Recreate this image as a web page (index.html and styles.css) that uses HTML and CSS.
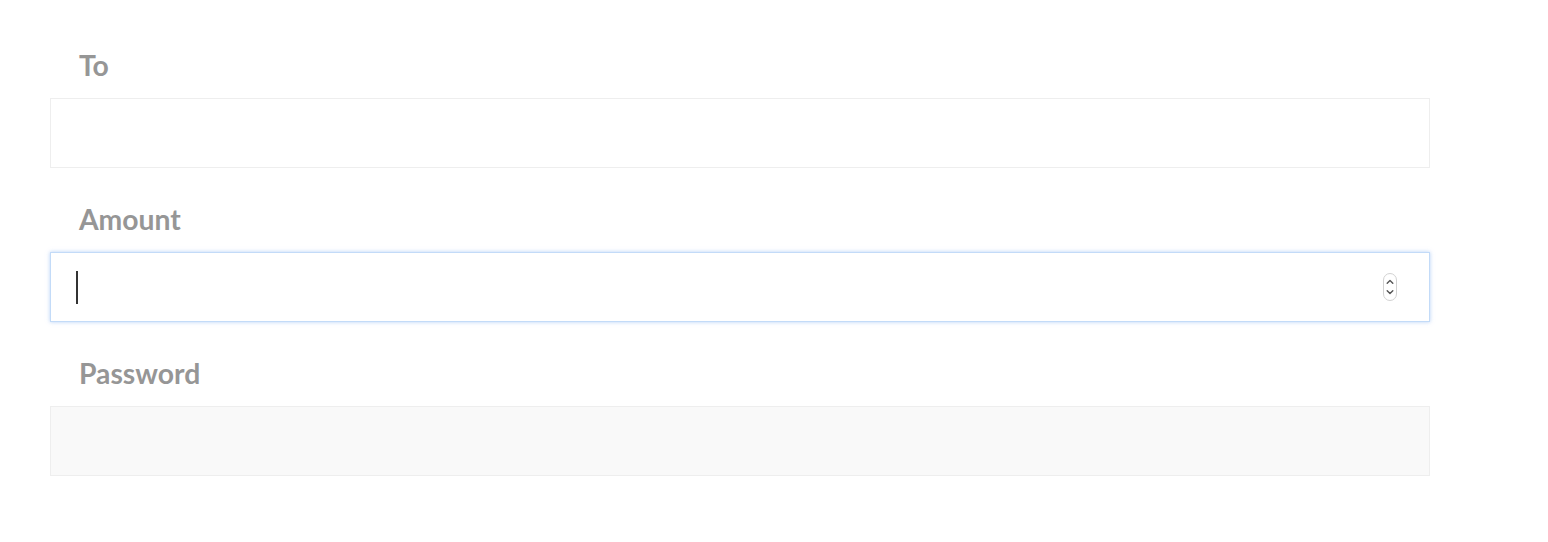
FILE: index.html
```html
<!DOCTYPE html>
<html lang="en">
<head>
<meta charset="utf-8">
<title>Send</title>
<link rel="stylesheet" href="styles.css">
</head>
<body>
<form class="form">
  <div class="field">
    <label class="label">To</label>
    <div class="input"></div>
  </div>
  <div class="field">
    <label class="label">Amount</label>
    <div class="input input--focus">
      <span class="caret"></span>
      <svg class="spinner" width="16" height="30" viewBox="0 0 16 30">
        <rect x="1.5" y="1.5" width="13" height="27" rx="6.5" fill="#fff" stroke="#d2d2d2" stroke-width="1"/>
        <path d="M5.2 11.2 L8 8.4 L10.8 11.2" fill="none" stroke="#555" stroke-width="1.4" stroke-linecap="round" stroke-linejoin="round"/>
        <path d="M5.2 18.8 L8 21.6 L10.8 18.8" fill="none" stroke="#555" stroke-width="1.4" stroke-linecap="round" stroke-linejoin="round"/>
      </svg>
    </div>
  </div>
  <div class="field">
    <label class="label">Password</label>
    <div class="input input--disabled"></div>
  </div>
</form>
</body>
</html>
```

FILE: styles.css
```css
html, body {
  margin: 0;
  padding: 0;
  background: #fff;
}

body {
  font-family: Lato, "Liberation Sans", sans-serif;
}

.form {
  display: flex;
  flex-direction: column;
  gap: 34px;
  width: 1380px;
  margin: 48px 0 0 50px;
}

.field {
  display: flex;
  flex-direction: column;
  gap: 16px;
}

.label {
  display: block;
  font-size: 28.3px;
  line-height: 34px;
  font-weight: 700;
  color: #969696;
  padding-left: 29px;
}

.input {
  box-sizing: border-box;
  height: 70px;
  border: 1px solid #eee;
  background: #fff;
  display: flex;
  align-items: center;
  padding: 0 31px 0 25px;
}

.input--focus {
  border-color: #c3dbf8;
  box-shadow: 0 0 4px rgba(120, 170, 240, 0.55);
  justify-content: space-between;
}

.input--disabled {
  background: #f9f9f9;
}

.caret {
  display: block;
  width: 2px;
  height: 33px;
  background: #333;
}

.spinner {
  display: block;
}
```
